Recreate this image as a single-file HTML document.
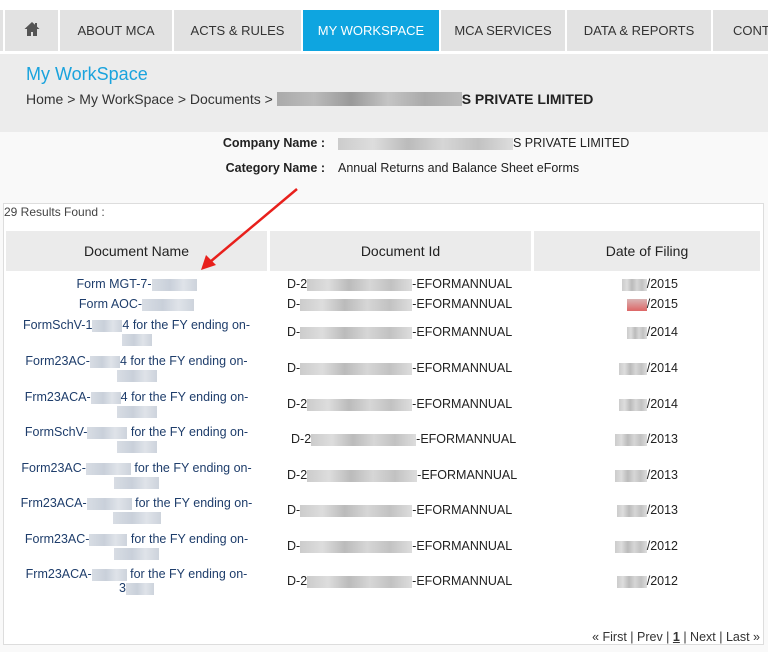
<!DOCTYPE html>
<html><head><meta charset="utf-8"><style>
*{margin:0;padding:0;box-sizing:border-box}
body{width:768px;height:652px;position:relative;background:#fff;font-family:"Liberation Sans",sans-serif;overflow:hidden;color:#222}
.a{position:absolute}
.tab{position:absolute;top:10px;height:41px;background:#e2e2e2;font-size:13px;color:#333;text-align:center;line-height:41px;white-space:nowrap;overflow:hidden}
.hd{position:absolute;top:231px;height:40px;background:#ebebeb;font-size:14px;color:#222;text-align:center;line-height:40px}
.n{position:absolute;left:6px;width:261px;text-align:center;font-size:12.5px;color:#1e3d6b;line-height:14px}
.d{position:absolute;left:287px;font-size:12.5px;color:#222;white-space:nowrap}
.t{position:absolute;right:90px;font-size:12.5px;color:#222;white-space:nowrap}
.b{display:inline-block;height:12px;vertical-align:middle;background:linear-gradient(90deg,#ccc,#ddd 20%,#bbb 40%,#d6d6d6 60%,#c2c2c2 80%,#ddd)}
.bb{display:inline-block;height:12px;vertical-align:middle;background:linear-gradient(90deg,#d8dde4,#c9d0da 40%,#dfe3e9 70%,#cdd3dc)}
</style></head><body>
<div class="a" style="left:0;top:10px;width:768px;height:43px;background:#fff"></div>
<div class="tab" style="left:0;width:3px"></div>
<div class="tab" style="left:5px;width:53px"><svg width="16" height="16" viewBox="0 0 16 16" style="vertical-align:-2px"><path d="M8 1L0.5 8H3v7h4v-4h2v4h4V8h2.5L13 5.6V2h-2v1.7z" fill="#555"/></svg></div>
<div class="tab" style="left:60px;width:112px">ABOUT MCA</div>
<div class="tab" style="left:174px;width:127px">ACTS &amp; RULES</div>
<div class="tab" style="left:303px;width:136px;background:#0ea5e0;color:#fff">MY WORKSPACE</div>
<div class="tab" style="left:441px;width:124px">MCA SERVICES</div>
<div class="tab" style="left:567px;width:144px">DATA &amp; REPORTS</div>
<div class="tab" style="left:713px;width:70px;text-align:left;padding-left:20px">CONTACT</div>
<div class="a" style="left:0;top:54px;width:768px;height:78px;background:#ececec"></div>
<div class="a" style="left:26px;top:64px;font-size:18px;color:#1aa3dd">My WorkSpace</div>
<div class="a" style="left:26px;top:91px;font-size:14px;color:#333;white-space:nowrap">Home &gt; My WorkSpace &gt; Documents &gt; <span style="display:inline-block;width:185px;height:14px;vertical-align:-2px;background:linear-gradient(90deg,#aaa,#bbb 20%,#999 40%,#c4c4c4 60%,#aaa 80%,#bbb)"></span><b style="color:#222">S PRIVATE LIMITED</b></div>
<div class="a" style="left:0;top:132px;width:768px;height:520px;background:#f9f9f9"></div>
<div class="a" style="left:150px;top:136px;width:175px;text-align:right;font-size:12.5px;font-weight:bold">Company Name :</div>
<div class="a" style="left:338px;top:136px;font-size:12.5px;white-space:nowrap"><span class="b" style="width:175px"></span>S PRIVATE LIMITED</div>
<div class="a" style="left:150px;top:161px;width:175px;text-align:right;font-size:12.5px;font-weight:bold">Category Name :</div>
<div class="a" style="left:338px;top:161px;font-size:12.5px">Annual Returns and Balance Sheet eForms</div>
<div class="a" style="left:3px;top:203px;width:761px;height:442px;background:#fff;border:1px solid #ddd"></div>
<div class="a" style="left:4px;top:205px;font-size:12px;color:#444">29 Results Found :</div>
<div class="hd" style="left:6px;width:261px">Document Name</div>
<div class="hd" style="left:270px;width:261px">Document Id</div>
<div class="hd" style="left:534px;width:226px">Date of Filing</div>

<div class="n" style="top:277px">Form MGT-7-<span class="bb" style="width:45px"></span></div>
<div class="d" style="top:277px">D-2<span class="b" style="width:105px"></span>-EFORMANNUAL</div>
<div class="t" style="top:277px"><span class="b" style="width:25px"></span>/2015</div>
<div class="n" style="top:297px">Form AOC-<span class="bb" style="width:52px"></span></div>
<div class="d" style="top:297px">D-<span class="b" style="width:112px"></span>-EFORMANNUAL</div>
<div class="t" style="top:297px"><span class="b" style="width:20px;background:linear-gradient(#d9b4b4,#d66)"></span>/2015</div>

<div class="n" style="top:318px">FormSchV-1<span class="bb" style="width:30px"></span>4 for the FY ending on-<br><span class="bb" style="width:30px"></span></div>
<div class="d" style="top:325px">D-<span class="b" style="width:112px"></span>-EFORMANNUAL</div>
<div class="t" style="top:325px"><span class="b" style="width:20px"></span>/2014</div>
<div class="n" style="top:354px">Form23AC-<span class="bb" style="width:30px"></span>4 for the FY ending on-<br><span class="bb" style="width:40px"></span></div>
<div class="d" style="top:361px">D-<span class="b" style="width:112px"></span>-EFORMANNUAL</div>
<div class="t" style="top:361px"><span class="b" style="width:28px"></span>/2014</div>
<div class="n" style="top:390px">Frm23ACA-<span class="bb" style="width:30px"></span>4 for the FY ending on-<br><span class="bb" style="width:40px"></span></div>
<div class="d" style="top:397px">D-2<span class="b" style="width:105px"></span>-EFORMANNUAL</div>
<div class="t" style="top:397px"><span class="b" style="width:28px"></span>/2014</div>
<div class="n" style="top:425px">FormSchV-<span class="bb" style="width:40px"></span> for the FY ending on-<br><span class="bb" style="width:40px"></span></div>
<div class="d" style="top:432px;left:291px">D-2<span class="b" style="width:105px"></span>-EFORMANNUAL</div>
<div class="t" style="top:432px"><span class="b" style="width:32px"></span>/2013</div>
<div class="n" style="top:461px">Form23AC-<span class="bb" style="width:45px"></span> for the FY ending on-<br><span class="bb" style="width:45px"></span></div>
<div class="d" style="top:468px">D-2<span class="b" style="width:110px"></span>-EFORMANNUAL</div>
<div class="t" style="top:468px"><span class="b" style="width:32px"></span>/2013</div>
<div class="n" style="top:496px">Frm23ACA-<span class="bb" style="width:45px"></span> for the FY ending on-<br><span class="bb" style="width:48px"></span></div>
<div class="d" style="top:503px">D-<span class="b" style="width:112px"></span>-EFORMANNUAL</div>
<div class="t" style="top:503px"><span class="b" style="width:30px"></span>/2013</div>
<div class="n" style="top:532px">Form23AC-<span class="bb" style="width:38px"></span> for the FY ending on-<br><span class="bb" style="width:45px"></span></div>
<div class="d" style="top:539px">D-<span class="b" style="width:112px"></span>-EFORMANNUAL</div>
<div class="t" style="top:539px"><span class="b" style="width:32px"></span>/2012</div>
<div class="n" style="top:567px">Frm23ACA-<span class="bb" style="width:35px"></span> for the FY ending on-<br>3<span class="bb" style="width:28px"></span></div>
<div class="d" style="top:574px">D-2<span class="b" style="width:105px"></span>-EFORMANNUAL</div>
<div class="t" style="top:574px"><span class="b" style="width:30px"></span>/2012</div>

<div class="a" style="right:8px;top:630px;font-size:12.5px;color:#333;white-space:nowrap">« First | Prev | <b style="text-decoration:underline">1</b> | Next | Last »</div>
<svg class="a" style="left:0;top:0" width="768" height="652"><line x1="297" y1="189" x2="210" y2="262" stroke="#e8201c" stroke-width="2.5"/><path d="M201 270L206 255L216 265Z" fill="#e8201c"/></svg>
</body></html>
